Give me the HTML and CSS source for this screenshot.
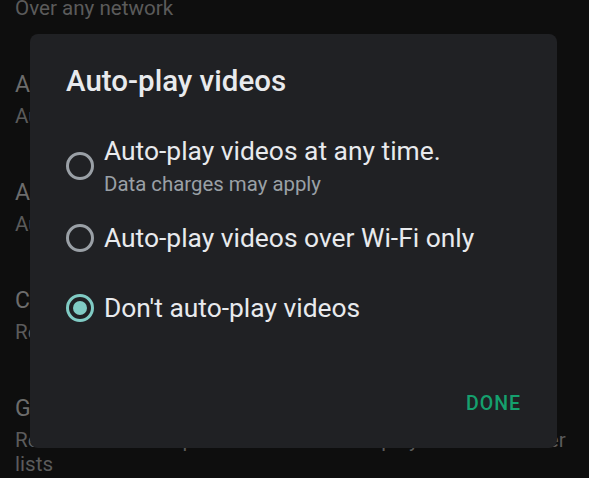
FILE: index.html
```html
<!DOCTYPE html>
<html lang="en">
<head>
<meta charset="utf-8">
<title>Auto-play videos</title>
<link rel="stylesheet" href="styles.css">
</head>
<body>
<div class="screen">
  <div class="prefs">
    <div class="pref pref-first">
      <div class="pref-summary">Over any network</div>
    </div>
    <div class="pref">
      <div class="pref-title">Auto-download</div>
      <div class="pref-summary">Automatically download new episodes</div>
    </div>
    <div class="pref">
      <div class="pref-title">Auto-play videos</div>
      <div class="pref-summary">Auto-play videos over Wi-Fi only</div>
    </div>
    <div class="pref">
      <div class="pref-title">Clear history</div>
      <div class="pref-summary">Remove all listening history</div>
    </div>
    <div class="pref">
      <div class="pref-title">Group played episodes</div>
      <div class="pref-summary">Remove finished episodes from the last played list and other lists</div>
    </div>
  </div>

  <div class="dialog" role="dialog">
    <h2 class="dialog-title">Auto-play videos</h2>
    <div class="options">
      <div class="option">
        <span class="radio"></span>
        <div class="option-text">
          <div class="option-label">Auto-play videos at any time.</div>
          <div class="option-sub">Data charges may apply</div>
        </div>
      </div>
      <div class="option">
        <span class="radio"></span>
        <div class="option-text">
          <div class="option-label">Auto-play videos over Wi-Fi only</div>
        </div>
      </div>
      <div class="option">
        <span class="radio radio-checked"></span>
        <div class="option-text">
          <div class="option-label">Don't auto-play videos</div>
        </div>
      </div>
    </div>
    <div class="actions">
      <button class="btn-text">Done</button>
    </div>
  </div>
</div>
</body>
</html>
```

FILE: styles.css
```css
* { box-sizing: border-box; }

html, body {
  margin: 0;
  padding: 0;
  background: #0e0e0e;
}

body {
  font-family: Roboto, "Noto Sans", "Liberation Sans", sans-serif;
}

.screen {
  position: relative;
  width: 589px;
  height: 478px;
  overflow: hidden;
  background: #0e0e0e;
}

/* background preference list (dimmed behind the dialog) */
.prefs {
  padding: 0 20px 0 15px;
  margin-top: -4px;
}

.pref {
  padding: 49px 0 0;
}

.pref-first {
  padding-top: 0;
}

.pref-title {
  font-size: 23px;
  line-height: 32px;
  color: #6c6c6c;
}

.pref-summary {
  font-size: 20.6px;
  line-height: 24px;
  color: #5b5b5b;
  margin-top: 3px;
}

.pref-first .pref-summary {
  margin-top: 0;
}

/* dialog */
.dialog {
  position: absolute;
  left: 30px;
  top: 34px;
  width: 527px;
  height: 414px;
  background: #202124;
  border-radius: 8px;
  display: flex;
  flex-direction: column;
  padding: 29px 37px 26px 36px;
}

.dialog-title {
  margin: 0;
  font-size: 29.5px;
  line-height: 36px;
  font-weight: 500;
  color: #e8eaed;
}

.options {
  margin-top: 29.5px;
  display: flex;
  flex-direction: column;
}

.option {
  display: flex;
  align-items: center;
  gap: 10px;
  min-height: 70px;
  padding: 6px 0;
}

.radio {
  flex: none;
  width: 28px;
  height: 28px;
  border: 3px solid #9aa0a6;
  border-radius: 50%;
  display: flex;
  align-items: center;
  justify-content: center;
}

.radio-checked {
  border-color: #80cbc4;
}

.radio-checked::after {
  content: "";
  width: 14px;
  height: 14px;
  border-radius: 50%;
  background: #80cbc4;
}

.option-label {
  font-size: 26.4px;
  line-height: 32px;
  color: #e8eaed;
  white-space: nowrap;
}

.option-sub {
  font-size: 20.4px;
  line-height: 26px;
  margin-top: 4.5px;
  color: #9aa0a6;
}

.actions {
  margin-top: auto;
  display: flex;
  justify-content: flex-end;
}

.btn-text {
  background: none;
  border: 0;
  padding: 0;
  margin-right: -1px;
  font-family: inherit;
  font-size: 19.5px;
  line-height: 36px;
  font-weight: 500;
  letter-spacing: 0.05em;
  text-transform: uppercase;
  color: #15a06e;
}
```
